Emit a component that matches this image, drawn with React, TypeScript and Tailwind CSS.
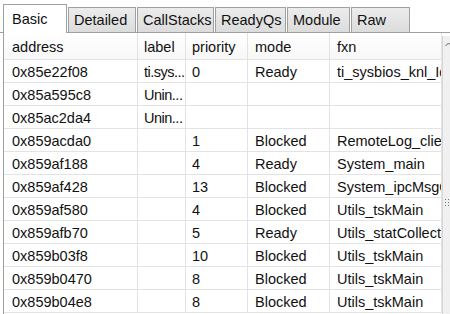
import React from 'react'

interface TaskRow {
  address: string
  label: string
  priority: string
  mode: string
  fxn: string
}

const TABS = [
  { name: 'Basic', width: 'w-[64px]' },
  { name: 'Detailed', width: 'w-[68px]' },
  { name: 'CallStacks', width: 'w-[77px]' },
  { name: 'ReadyQs', width: 'w-[71px]' },
  { name: 'Module', width: 'w-[63px]' },
  { name: 'Raw', width: 'w-[59px]' },
]

const ROWS: TaskRow[] = [
  { address: '0x85e22f08', label: 'ti.sys...', priority: '0', mode: 'Ready', fxn: 'ti_sysbios_knl_Idle_loop' },
  { address: '0x85a595c8', label: 'Unin...', priority: '', mode: '', fxn: '' },
  { address: '0x85ac2da4', label: 'Unin...', priority: '', mode: '', fxn: '' },
  { address: '0x859acda0', label: '', priority: '1', mode: 'Blocked', fxn: 'RemoteLog_clientTask' },
  { address: '0x859af188', label: '', priority: '4', mode: 'Ready', fxn: 'System_main' },
  { address: '0x859af428', label: '', priority: '13', mode: 'Blocked', fxn: 'System_ipcMsgQTaskMain' },
  { address: '0x859af580', label: '', priority: '4', mode: 'Blocked', fxn: 'Utils_tskMain' },
  { address: '0x859afb70', label: '', priority: '5', mode: 'Ready', fxn: 'Utils_statCollectorTskMain' },
  { address: '0x859b03f8', label: '', priority: '10', mode: 'Blocked', fxn: 'Utils_tskMain' },
  { address: '0x859b0470', label: '', priority: '8', mode: 'Blocked', fxn: 'Utils_tskMain' },
  { address: '0x859b04e8', label: '', priority: '8', mode: 'Blocked', fxn: 'Utils_tskMain' },
]

const COLS = 'grid grid-cols-[134px_48px_62px_82px_112px]'
const cell =
  'overflow-hidden whitespace-nowrap border-r border-b border-[#e3e3e3] px-[6px] pt-[4px] flex items-center'

function App() {
  return (
    <div className="relative h-[314px] w-[450px] overflow-hidden bg-white font-['Liberation_Sans',Arial,sans-serif] text-[14.5px] text-[#111]">
      {/* tab strip */}
      <div className="flex h-[33px] items-end border-b border-[#a0a0a0] pl-[3px]">
        {TABS.map((tab, i) =>
          i === 0 ? (
            <div
              key={tab.name}
              className={`${tab.width} relative -mb-px flex h-[29px] items-center border-x border-t border-[#a0a0a0] bg-white pl-[8px] pt-[1px]`}
            >
              {tab.name}
            </div>
          ) : (
            <div
              key={tab.name}
              className={`${tab.width} ml-px flex h-[25px] items-center border-x border-t border-[#a0a0a0] bg-gradient-to-b from-[#ececec] to-[#dcdcdc] pl-[5px] pt-[2px]`}
            >
              {tab.name}
            </div>
          ),
        )}
      </div>

      {/* body */}
      <div className="ml-[3px] flex h-[281px] border-l border-[#a0a0a0]">
        <div className="w-[439px] overflow-hidden">
          <div className={`${COLS} h-[27px] bg-gradient-to-b from-white to-[#f7f7f7]`}>
            <div className={`${cell} pl-[8px]`}>address</div>
            <div className={cell}>label</div>
            <div className={cell}>priority</div>
            <div className={`${cell} pl-[7px]`}>mode</div>
            <div className={`${cell} pl-[7px]`}>fxn</div>
          </div>
          {ROWS.map((row) => (
            <div key={row.address} className={`${COLS} h-[23px]`}>
              <div className={`${cell} pl-[8px]`}>{row.address}</div>
              <div className={`${cell} pr-0 tracking-[-0.5px]`}>{row.label}</div>
              <div className={cell}>{row.priority}</div>
              <div className={`${cell} pl-[7px]`}>{row.mode}</div>
              <div className={`${cell} pl-[7px]`}>{row.fxn}</div>
            </div>
          ))}
        </div>

        {/* vertical scrollbar, cut off by the window edge */}
        <div className="mt-[3px] flex w-[8px] flex-col items-center border-l border-[#d6d6d6] bg-[#f0f0f0]">
          <svg width="7" height="5" viewBox="0 0 7 5" className="mt-[6px] ml-[3px]">
            <path d="M0.5 4 L3.5 1 L6.5 4" fill="none" stroke="#606060" strokeWidth="1" />
          </svg>
          <svg width="6" height="8" viewBox="0 0 6 8" className="mt-[152px] ml-[2px]">
            <rect x="0" y="0" width="1" height="1" fill="#707070" />
            <rect x="0" y="3" width="1" height="1" fill="#707070" />
            <rect x="0" y="6" width="1" height="1" fill="#707070" />
            <rect x="3" y="0" width="1" height="1" fill="#707070" />
            <rect x="3" y="3" width="1" height="1" fill="#707070" />
            <rect x="3" y="6" width="1" height="1" fill="#707070" />
          </svg>
        </div>
      </div>
    </div>
  )
}

export default App
